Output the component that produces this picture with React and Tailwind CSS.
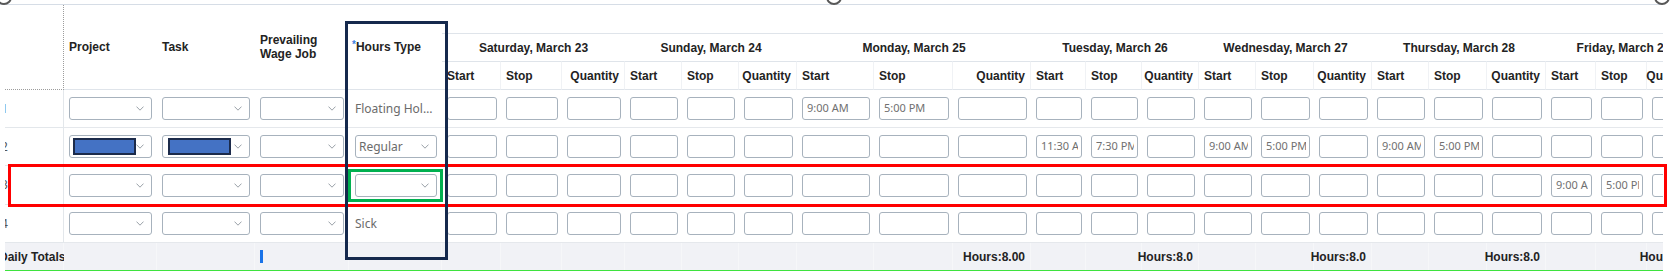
import React from 'react'

const days = [
  'Saturday, March 23',
  'Sunday, March 24',
  'Monday, March 25',
  'Tuesday, March 26',
  'Wednesday, March 27',
  'Thursday, March 28',
  'Friday, March 29',
]

const subCols = ['Start', 'Stop', 'Quantity']

// values typed into the day cells, keyed by column index (0..20)
const rows = [
  { num: '1', hours: { text: 'Floating Hol…' }, times: { 6: '9:00 AM', 7: '5:00 PM' } },
  {
    num: '2',
    redacted: true,
    hours: { select: 'Regular' },
    times: { 9: '11:30 AM', 10: '7:30 PM', 12: '9:00 AM', 13: '5:00 PM', 15: '9:00 AM', 16: '5:00 PM' },
  },
  { num: '3', hours: { select: '' }, times: { 18: '9:00 AM', 19: '5:00 PM' } },
  { num: '4', hours: { text: 'Sick' }, times: {} },
]

const totals = { 8: 'Hours:8.00', 11: 'Hours:8.0', 14: 'Hours:8.0', 17: 'Hours:8.0', 20: 'Hours:8.0' }

const Chevron = () => (
  <svg className="ml-auto mr-[7px] shrink-0" width="8" height="5" viewBox="0 0 8 5">
    <path d="M.5.6 4 4.2 7.5.6" fill="none" stroke="#9aa1a8" strokeWidth="1" />
  </svg>
)

const Select = ({ value, redact }) => (
  <div className="flex h-[23px] w-full items-center rounded-[3px] border-[1.5px] border-[#a7b2bd] bg-white">
    {redact === 'project' && <div className="ml-[2.5px] h-[17px] w-[63px] border-2 border-[#1c2b4b] bg-[#4472c4]" />}
    {redact === 'task' && <div className="ml-[4.5px] h-[17px] w-[63px] border-2 border-[#1c2b4b] bg-[#4472c4]" />}
    {value && <span className="pl-[3px] font-['Noto_Sans',sans-serif] text-[12px] text-[#6b6b6b]">{value}</span>}
    <Chevron />
  </div>
)

const Field = ({ value }) => (
  <div className="flex h-[23px] w-full items-center rounded-[3px] border-[1.5px] border-[#a7b2bd] bg-white pl-[4px] pr-[3px]">
    {value && (
      <span className="overflow-hidden whitespace-nowrap font-['Noto_Sans',sans-serif] text-[11px] text-[#707070]">
        {value}
      </span>
    )}
  </div>
)

const Handle = ({ className }) => (
  <div className={`absolute top-[-11px] h-[16px] w-[16px] rounded-full border-2 border-[#585858] bg-white ${className}`} />
)

export default function App() {
  return (
    <div className="relative h-[280px] w-[1680px] overflow-hidden bg-white font-['Liberation_Sans',Arial,sans-serif] text-[12px] text-[#232323]">
      <div className="mt-[4px] h-px w-[1663px] bg-[#d6dde6]" />

      <div className="ml-[5px] w-[1658px] overflow-hidden">
        <div className="grid w-[1696px] grid-cols-[59px_93px_98px_94px_93px_59px_61px_63px_57px_57px_58px_77px_79px_78px_55px_56px_57px_57px_58px_58px_57px_58px_59px_50px_51px_54px] grid-rows-[28px_28px_29px_38px_38px_39px_38px_27px]">
          {/* header */}
          <div className="row-span-3 border-r border-b border-dotted border-[#9c9c9c]" />
          <div className="row-span-3 flex items-center border-b border-[#dfe4ea] pl-[5px] font-bold">Project</div>
          <div className="row-span-3 flex items-center border-b border-[#dfe4ea] pl-[5px] font-bold">Task</div>
          <div className="row-span-3 flex items-center border-b border-[#dfe4ea] pl-[5px] font-bold leading-[14px]">
            Prevailing Wage Job
          </div>
          <div className="row-span-3 flex items-center border-b border-[#dfe4ea] pl-[3px] font-bold">
            <span className="self-start pt-[35px] text-[10px] leading-none text-[#3b7fe0]">*</span>
            Hours Type
          </div>
          <div className="col-span-21" />

          {days.map((d) => (
            <div
              key={d}
              className="col-span-3 flex items-center justify-center whitespace-nowrap border-t border-[#dfe4ea] font-bold"
            >
              {d}
            </div>
          ))}

          {days.map((d) =>
            subCols.map((c) => (
              <div
                key={d + c}
                className={
                  c === 'Quantity'
                    ? 'flex items-center justify-end border-t border-b border-r border-[#dfe4ea] border-r-[#f0f2f5] pr-[5px] font-bold'
                    : 'flex items-center border-t border-b border-r border-[#dfe4ea] border-r-[#f0f2f5] pl-[5px] font-bold'
                }
              >
                {c}
              </div>
            ))
          )}

          {/* body rows */}
          {rows.map((r) => (
            <React.Fragment key={r.num}>
              <div className="flex items-center border-r border-b border-[#e3e7eb]">
                <span className="-ml-[4px] font-['Noto_Sans',sans-serif] text-[12px] text-[#555]">{r.num}</span>
              </div>
              <div className="flex items-center border-b border-[#e5e8ec] px-[5px]">
                <Select redact={r.redacted ? 'project' : null} />
              </div>
              <div className="flex items-center border-b border-[#e5e8ec] px-[5px]">
                <Select redact={r.redacted ? 'task' : null} />
              </div>
              <div className="flex items-center border-b border-[#e5e8ec] px-[5px]">
                <Select />
              </div>
              <div className="flex items-center border-b border-[#e5e8ec] pl-[6px] pr-[5px]">
                {r.hours.text ? (
                  <span className="font-['Noto_Sans',sans-serif] text-[12px] text-[#6b6b6b]">{r.hours.text}</span>
                ) : (
                  <Select value={r.hours.select} />
                )}
              </div>
              {Array.from({ length: 21 }, (_, i) => (
                <div key={i} className="flex items-center border-b border-[#e5e8ec] pl-[5px] pr-[4px]">
                  <Field value={r.times[i]} />
                </div>
              ))}
            </React.Fragment>
          ))}

          {/* daily totals */}
          <div className="flex items-center border-r border-[#f6f7f9] bg-[#f1f2f6]">
            <span className="-ml-[6px] whitespace-nowrap font-bold">Daily Totals</span>
          </div>
          <div className="border-r border-[#f6f7f9] bg-[#f1f2f6]" />
          <div className="border-r border-[#f6f7f9] bg-[#f1f2f6]" />
          <div className="flex items-center border-r border-[#f6f7f9] bg-[#f1f2f6] pl-[5px]">
            <div className="h-[13px] w-[3px] bg-[#1a73e8]" />
          </div>
          <div className="border-r border-[#f6f7f9] bg-[#f1f2f6]" />
          {Array.from({ length: 21 }, (_, i) => (
            <div key={i} className="flex items-center justify-end border-r border-[#f6f7f9] bg-[#f1f2f6] pr-[5px]">
              {totals[i] && <span className="whitespace-nowrap font-bold">{totals[i]}</span>}
            </div>
          ))}
        </div>
      </div>
      <div className="ml-[5px] h-px w-[1658px] bg-[#3ee23e]" />

      {/* annotation frames */}
      <div className="absolute left-[8px] top-[164px] h-[43px] w-[1659px] border-[3px] border-[#ff0000]" />
      <div className="absolute left-[345px] top-[21px] h-[239px] w-[103px] border-[3px] border-[#15294d]" />
      <div className="absolute left-[348px] top-[169px] h-[33px] w-[95px] border-[3px] border-[#00b050]" />

      <Handle className="left-[-4px]" />
      <Handle className="left-[826px]" />
      <Handle className="left-[1654px]" />
    </div>
  )
}
